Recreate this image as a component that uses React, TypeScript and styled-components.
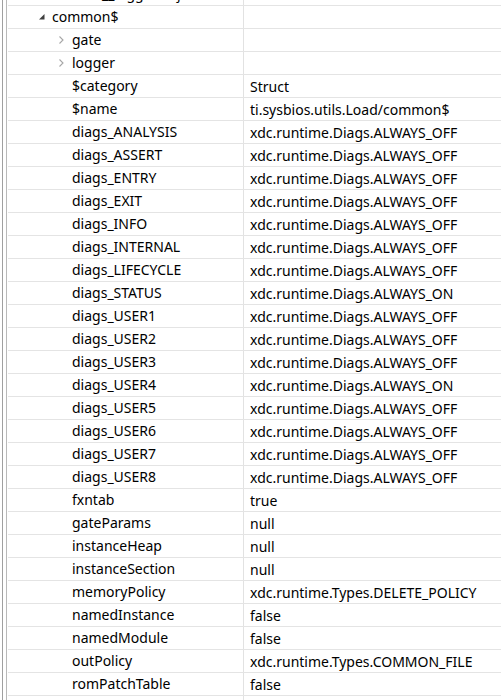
import React from 'react';
import styled, { createGlobalStyle } from 'styled-components';

const Global = createGlobalStyle`
  html, body {
    margin: 0;
    padding: 0;
    background: #ffffff;
    overflow: hidden;
  }
`;

type Row = {
  name: string;
  value?: string;
  level: number;
  toggle?: 'open' | 'closed';
};

const OFF = 'xdc.runtime.Diags.ALWAYS_OFF';
const ON = 'xdc.runtime.Diags.ALWAYS_ON';

const rows: Row[] = [
  { name: 'Module__loggerObj', level: 1 },
  { name: 'common$', level: 1, toggle: 'open' },
  { name: 'gate', level: 2, toggle: 'closed' },
  { name: 'logger', level: 2, toggle: 'closed' },
  { name: '$category', value: 'Struct', level: 2 },
  { name: '$name', value: 'ti.sysbios.utils.Load/common$', level: 2 },
  { name: 'diags_ANALYSIS', value: OFF, level: 2 },
  { name: 'diags_ASSERT', value: OFF, level: 2 },
  { name: 'diags_ENTRY', value: OFF, level: 2 },
  { name: 'diags_EXIT', value: OFF, level: 2 },
  { name: 'diags_INFO', value: OFF, level: 2 },
  { name: 'diags_INTERNAL', value: OFF, level: 2 },
  { name: 'diags_LIFECYCLE', value: OFF, level: 2 },
  { name: 'diags_STATUS', value: ON, level: 2 },
  { name: 'diags_USER1', value: OFF, level: 2 },
  { name: 'diags_USER2', value: OFF, level: 2 },
  { name: 'diags_USER3', value: OFF, level: 2 },
  { name: 'diags_USER4', value: ON, level: 2 },
  { name: 'diags_USER5', value: OFF, level: 2 },
  { name: 'diags_USER6', value: OFF, level: 2 },
  { name: 'diags_USER7', value: OFF, level: 2 },
  { name: 'diags_USER8', value: OFF, level: 2 },
  { name: 'fxntab', value: 'true', level: 2 },
  { name: 'gateParams', value: 'null', level: 2 },
  { name: 'instanceHeap', value: 'null', level: 2 },
  { name: 'instanceSection', value: 'null', level: 2 },
  { name: 'memoryPolicy', value: 'xdc.runtime.Types.DELETE_POLICY', level: 2 },
  { name: 'namedInstance', value: 'false', level: 2 },
  { name: 'namedModule', value: 'false', level: 2 },
  { name: 'outPolicy', value: 'xdc.runtime.Types.COMMON_FILE', level: 2 },
  { name: 'romPatchTable', value: 'false', level: 2 },
  // next row scrolls in below the fold; only its grid lines show
  { name: '', level: 2 },
];

const Viewport = styled.div`
  height: 700px;
  overflow: hidden;
  display: flex;
  padding-left: 2px;
  font-family: 'Noto Sans', 'Open Sans', sans-serif;
  font-size: 14px;
  color: #000000;
`;

const OuterEdge = styled.div`
  width: 3px;
  border-left: 1px solid #a0a0a0;
  flex-shrink: 0;
`;

const InnerEdge = styled.div`
  width: 1px;
  background: #b9b9b9;
  flex-shrink: 0;
`;

const Table = styled.div`
  flex: 1;
  display: flex;
  flex-direction: column;
  margin-top: -17px;
  padding-left: 1px;
`;

const Line = styled.div`
  display: grid;
  grid-template-columns: 236px 1fr;
  height: 22px;
  border-bottom: 1px solid #e4e4e4;
`;

const NameCell = styled.div<{ $level: number }>`
  display: flex;
  align-items: center;
  padding-left: ${p => (p.$level === 1 ? 30 : 50)}px;
  border-right: 1px solid #e2e2e2;
  white-space: nowrap;
  overflow: hidden;
`;

const Toggle = styled.span`
  width: 14px;
  height: 22px;
  display: flex;
  align-items: center;
  flex-shrink: 0;
`;

const Label = styled.span`
  line-height: 22px;
`;

const ValueCell = styled.div`
  display: flex;
  align-items: center;
  padding-left: 6px;
  white-space: nowrap;
  overflow: hidden;
`;

const OpenArrow = () => (
  <svg width="8" height="8" viewBox="0 0 8 8">
    <polygon points="6.5,1 6.5,6.5 1,6.5" fill="#404040" />
  </svg>
);

const ClosedArrow = () => (
  <svg width="8" height="10" viewBox="0 0 8 10">
    <polyline
      points="1.5,1.5 5,5 1.5,8.5"
      fill="none"
      stroke="#a6a6a6"
      strokeWidth="1.1"
    />
  </svg>
);

export default function App() {
  return (
    <>
      <Global />
      <Viewport>
        <OuterEdge />
        <InnerEdge />
        <Table>
          {rows.map((r, i) => (
            <Line key={`${r.name}-${i}`}>
              <NameCell $level={r.level}>
                <Toggle>
                  {r.toggle === 'open' && <OpenArrow />}
                  {r.toggle === 'closed' && <ClosedArrow />}
                </Toggle>
                <Label>{r.name}</Label>
              </NameCell>
              <ValueCell>{r.value}</ValueCell>
            </Line>
          ))}
        </Table>
      </Viewport>
    </>
  );
}
